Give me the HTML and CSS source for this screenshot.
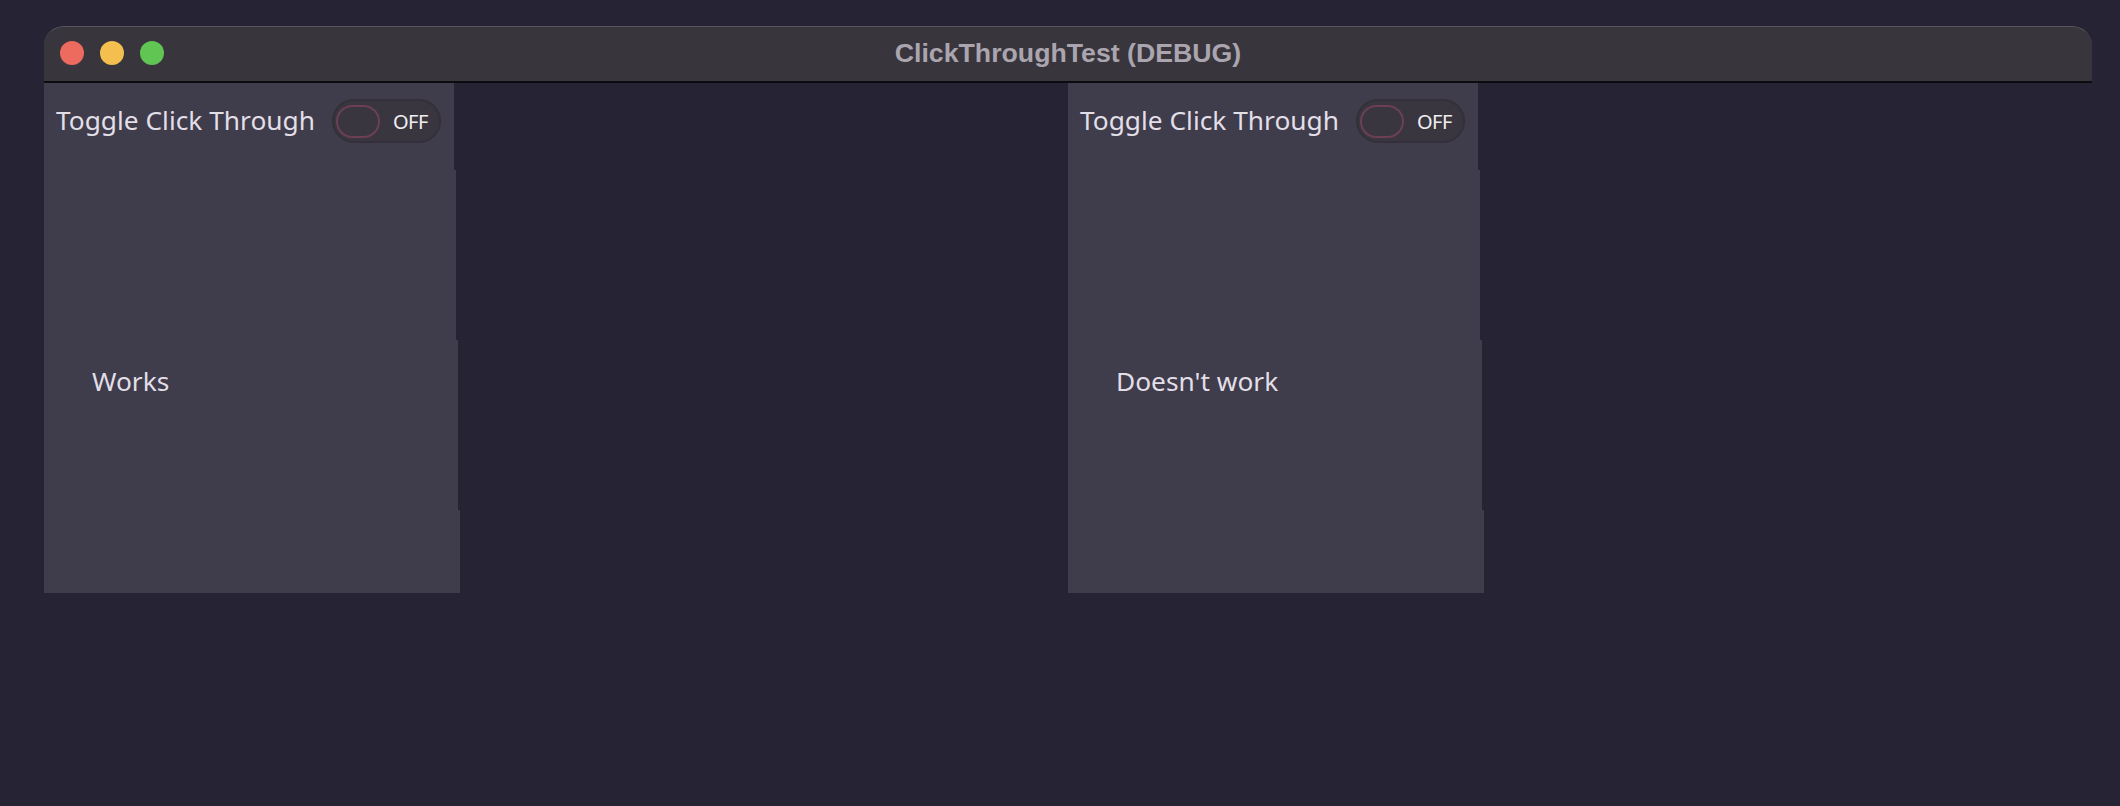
FILE: index.html
```html
<!DOCTYPE html>
<html lang="en">

<head>
    <meta charset="UTF-8">
    <meta name="viewport" content="width=device-width, initial-scale=1.0">
    <title>ClickThroughTest (DEBUG)</title>
    <link rel="stylesheet" href="styles.css">
</head>

<body>
    <div class="window">
        <div class="title_bar">
            <div class="lights">
                <span class="light red"></span>
                <span class="light yellow"></span>
                <span class="light green"></span>
            </div>
            <div class="title">ClickThroughTest (DEBUG)</div>
        </div>
        <div class="content">
            <div class="panel">
                <div class="slice slice_1">
                    <span class="toggle_label">Toggle Click Through</span>
                    <div class="switch">
                        <div class="knob"></div>
                        <span class="switch_text">OFF</span>
                    </div>
                </div>
                <div class="slice slice_2"></div>
                <div class="slice slice_3">
                    <span class="panel_label">Works</span>
                </div>
                <div class="slice slice_4"></div>
            </div>
            <div class="panel">
                <div class="slice slice_1">
                    <span class="toggle_label">Toggle Click Through</span>
                    <div class="switch">
                        <div class="knob"></div>
                        <span class="switch_text">OFF</span>
                    </div>
                </div>
                <div class="slice slice_2"></div>
                <div class="slice slice_3">
                    <span class="panel_label">Doesn't work</span>
                </div>
                <div class="slice slice_4"></div>
            </div>
        </div>
    </div>
</body>

</html>
```

FILE: styles.css
```css
*,
::before,
::after {
    box-sizing: border-box;
}

body {
    background-color: #252334;
    margin: unset;
    width: 100%;
    height: 100vh;
    overflow: hidden;
    font-family: "Noto Sans", "Open Sans", sans-serif;
}

.window {
    margin: 26px 0 0 44px;
    width: 2048px;
}

.title_bar {
    height: 57px;
    background-color: #38353d;
    border-top: 1px solid #58555e;
    border-bottom: 2px solid #0c0b10;
    border-radius: 20px 20px 0 0;
    display: flex;
    align-items: center;
    position: relative;
}

.lights {
    display: flex;
    gap: 16px;
    padding-left: 16px;
    padding-bottom: 2px;
}

.light {
    width: 24px;
    height: 24px;
    border-radius: 50%;
}

.red {
    background-color: #ec6a5e;
}

.yellow {
    background-color: #f4bf4f;
}

.green {
    background-color: #61c554;
}

.title {
    position: absolute;
    left: 0;
    right: 0;
    top: 0;
    bottom: 0;
    display: flex;
    justify-content: center;
    align-items: center;
    font-family: "Liberation Sans", Arial, sans-serif;
    font-weight: bold;
    font-size: 26.7px;
    color: #aaa5ae;
    padding-bottom: 2px;
}

.content {
    display: flex;
    gap: 608px;
}

.panel {
    display: flex;
    flex-direction: column;
    width: 416px;
}

.slice {
    background-color: #3f3c4c;
}

.slice_1 {
    width: 410px;
    height: 87px;
    display: flex;
    align-items: flex-start;
    gap: 17px;
    padding: 16px 0 0 12px;
}

.slice_2 {
    width: 412px;
    height: 170px;
}

.slice_3 {
    width: 414px;
    height: 170px;
    padding: 20px 0 0 48px;
}

.slice_4 {
    width: 416px;
    height: 83px;
}

.toggle_label,
.panel_label {
    font-size: 26.3px;
    color: #e2dfe7;
    line-height: 42px;
    white-space: nowrap;
}

.switch {
    width: 109px;
    height: 44px;
    border-radius: 22px;
    background-color: #39363f;
    border: 2px solid #33303a;
    display: flex;
    align-items: center;
    padding-left: 2px;
    gap: 13px;
}

.knob {
    width: 44px;
    height: 33px;
    border-radius: 17px;
    border: 2px solid #6c3f57;
}

.switch_text {
    font-size: 20px;
    font-weight: normal;
    letter-spacing: -0.5px;
    color: #f0eef2;
}
```
